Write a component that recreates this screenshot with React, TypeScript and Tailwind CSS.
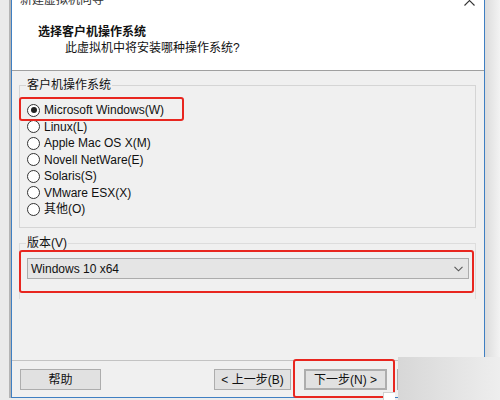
import React from "react";

const font = { fontFamily: '"Liberation Sans", "Noto Sans CJK SC", sans-serif' };

function Radio({ label, checked }: { label: string; checked?: boolean }) {
  return (
    <div className="h-[16.5px] flex items-center gap-[4px]">
      <div className="w-[13px] h-[13px] rounded-full border border-[#333333] bg-white flex items-center justify-center">
        {checked && <div className="w-[6px] h-[6px] rounded-full bg-[#222222]" />}
      </div>
      <span className="text-[12px] leading-[14px] text-[#111111]">{label}</span>
    </div>
  );
}

function Btn({ children, className }: { children: React.ReactNode; className?: string }) {
  return (
    <div
      className={
        "h-[21px] flex items-center justify-center text-[12px] leading-[14px] text-[#111111] bg-[#e1e1e1] border border-[#adadad] " +
        (className ?? "")
      }
    >
      {children}
    </div>
  );
}

export default function App() {
  return (
    <div className="w-[500px] h-[400px] relative overflow-hidden bg-[#ececec] flex" style={font}>
      <div className="w-[9px] bg-[#eaeaea]" />
      <div className="w-[476px] h-[398px] border-l-2 border-[#b4b4b4] flex">
        <div className="flex-1 border-l border-r border-b border-[#3f7fc2] flex flex-col">
          {/* header */}
          <div className="h-[71px] bg-white border-b border-[#a0a0a0] flex flex-col">
            <div className="h-[8px] flex justify-between pl-[8px] pr-[9px]">
              <span className="-mt-[7px] text-[12px] leading-[14px] text-[#333333]">新建虚拟机向导</span>
              <svg width="11" height="11" viewBox="0 0 11 11" className="-mt-[5px]">
                <path d="M0.5 0.5 L10.5 10.5 M10.5 0.5 L0.5 10.5" stroke="#333" strokeWidth="1.1" fill="none" />
              </svg>
            </div>
            <div className="mt-[16px] pl-[26px] text-[12px] leading-[16px] font-bold text-[#111111]">
              选择客户机操作系统
            </div>
            <div className="pl-[53px] text-[12px] leading-[16px] text-[#111111]">此虚拟机中将安装哪种操作系统?</div>
          </div>
          {/* body */}
          <div className="flex-1 bg-[#f0f0f0] flex flex-col">
            <div className="mt-[14px] ml-[7px] mr-[8px] h-[143px] border border-[#d5d5d5] relative pt-[16px] pl-[7px]">
              <span className="absolute left-[6px] -top-[8px] px-[1px] bg-[#f0f0f0] text-[12px] leading-[14px] text-[#111111]">
                客户机操作系统
              </span>
              <Radio label="Microsoft Windows(W)" checked />
              <Radio label="Linux(L)" />
              <Radio label="Apple Mac OS X(M)" />
              <Radio label="Novell NetWare(E)" />
              <Radio label="Solaris(S)" />
              <Radio label="VMware ESX(X)" />
              <Radio label="其他(O)" />
            </div>
            <div className="mt-[15px] ml-[7px] mr-[8px] h-[56px] border border-b-0 border-[#dddddd] relative pt-[14px] pl-[7px] pr-[6px]">
              <span className="absolute left-[6px] -top-[8px] px-[1px] bg-[#f0f0f0] text-[12px] leading-[14px] text-[#111111]">
                版本(V)
              </span>
              <div className="h-[21px] bg-[#e5e5e5] border border-[#acacac] flex items-center justify-between pl-[3px] pr-[5px]">
                <span className="text-[12px] leading-[14px] text-[#111111]">Windows 10 x64</span>
                <svg width="9" height="6" viewBox="0 0 9 6">
                  <path d="M0.5 0.8 L4.5 4.8 L8.5 0.8" stroke="#555" strokeWidth="1.1" fill="none" />
                </svg>
              </div>
            </div>
            <div className="flex-1" />
            <div className="h-[37px] border-t border-[#c3c3c3] flex pt-[8px] pl-[8px] pr-[11px]">
              <Btn className="w-[81px]">帮助</Btn>
              <div className="flex-1" />
              <Btn className="w-[77px]">&lt; 上一步(B)</Btn>
              <Btn className="w-[83px] ml-[13px] border-[#0078d7] border-2">下一步(N) &gt;</Btn>
              <Btn className="w-[76px] ml-[10px]">取消</Btn>
            </div>
          </div>
        </div>
      </div>
      <div className="flex-1 bg-gradient-to-r from-[#dcdcdc] to-[#f3f3f3]" />

      {/* overlays */}
      <div className="absolute left-[19px] top-[97px] w-[165px] h-[24px] border-2 border-[#e8261f] rounded-[3px]" />
      <div className="absolute left-[19px] top-[250px] w-[455px] h-[43px] border-2 border-[#e8261f] rounded-[3px]" />
      <div className="absolute left-[293px] top-[359px] w-[102px] h-[39px] border-2 border-[#e8261f] rounded-[3px]" />
      <div className="absolute left-[398px] top-[357px] right-0 bottom-0 bg-gradient-to-r from-[#d7d7d7] to-[#eeeeee]" />
      <div className="absolute left-[383px] top-[392px] w-[12px] h-[8px] bg-white border-l border-t border-[#d0d0d0]" />
    </div>
  );
}
